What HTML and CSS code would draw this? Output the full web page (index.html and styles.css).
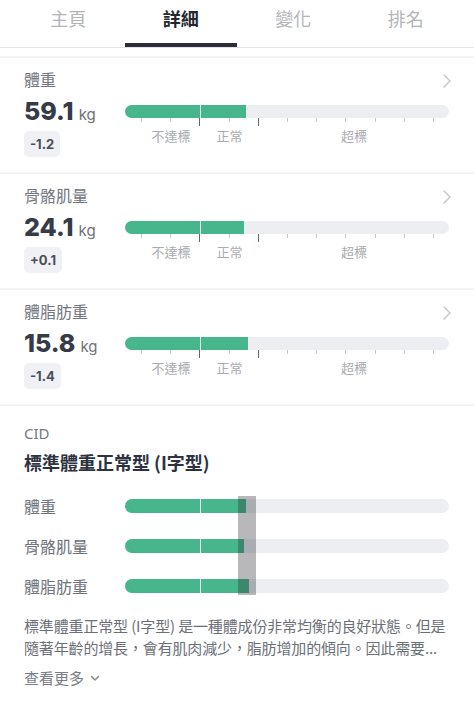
FILE: index.html
```html
<!DOCTYPE html>
<html lang="zh-Hant">
<head>
    <meta charset="UTF-8">
    <meta name="viewport" content="width=device-width, initial-scale=1.0">
    <title>身體組成 - 詳細</title>
    <link rel="stylesheet" href="styles.css">
</head>
<body>

<div class="tabs">
    <div class="tab">主頁</div>
    <div class="tab active">詳細</div>
    <div class="tab">變化</div>
    <div class="tab">排名</div>
</div>

<div class="list">
    <div class="item">
        <div class="item-head">
            <span class="item-name">體重</span>
            <svg class="arrow" width="10" height="16" viewBox="0 0 10 16"><polyline points="2,2 8,8 2,14" fill="none" stroke="#c9cacf" stroke-width="1.6" stroke-linecap="round" stroke-linejoin="round"/></svg>
        </div>
        <div class="item-body">
            <div class="item-left">
                <div class="value">59.1<span class="unit">kg</span></div>
                <span class="diff">-1.2</span>
            </div>
            <div class="scale">
                <div class="bar"><div class="fill" style="width: 121px"></div></div>
                <div class="ticks">
                    <i></i><i></i><i class="major"></i><i></i><i class="major"></i><i></i><i></i><i></i><i></i><i></i><i></i>
                </div>
                <div class="zones"><span>不達標</span><span>正常</span><span>超標</span></div>
            </div>
        </div>
    </div>

    <div class="item">
        <div class="item-head">
            <span class="item-name">骨骼肌量</span>
            <svg class="arrow" width="10" height="16" viewBox="0 0 10 16"><polyline points="2,2 8,8 2,14" fill="none" stroke="#c9cacf" stroke-width="1.6" stroke-linecap="round" stroke-linejoin="round"/></svg>
        </div>
        <div class="item-body">
            <div class="item-left">
                <div class="value">24.1<span class="unit">kg</span></div>
                <span class="diff">+0.1</span>
            </div>
            <div class="scale">
                <div class="bar"><div class="fill" style="width: 119px"></div></div>
                <div class="ticks">
                    <i></i><i></i><i class="major"></i><i></i><i class="major"></i><i></i><i></i><i></i><i></i><i></i><i></i>
                </div>
                <div class="zones"><span>不達標</span><span>正常</span><span>超標</span></div>
            </div>
        </div>
    </div>

    <div class="item">
        <div class="item-head">
            <span class="item-name">體脂肪重</span>
            <svg class="arrow" width="10" height="16" viewBox="0 0 10 16"><polyline points="2,2 8,8 2,14" fill="none" stroke="#c9cacf" stroke-width="1.6" stroke-linecap="round" stroke-linejoin="round"/></svg>
        </div>
        <div class="item-body">
            <div class="item-left">
                <div class="value">15.8<span class="unit">kg</span></div>
                <span class="diff">-1.4</span>
            </div>
            <div class="scale">
                <div class="bar"><div class="fill" style="width: 123px"></div></div>
                <div class="ticks">
                    <i></i><i></i><i class="major"></i><i></i><i class="major"></i><i></i><i></i><i></i><i></i><i></i><i></i>
                </div>
                <div class="zones"><span>不達標</span><span>正常</span><span>超標</span></div>
            </div>
        </div>
    </div>
</div>

<div class="cid">
    <div class="cid-label">CID</div>
    <div class="cid-title">標準體重正常型 (I字型)</div>

    <div class="compare">
        <div class="compare-row">
            <span class="compare-name">體重</span>
            <div class="bar"><div class="fill" style="width: 121px"></div></div>
        </div>
        <div class="compare-row">
            <span class="compare-name">骨骼肌量</span>
            <div class="bar"><div class="fill" style="width: 119px"></div></div>
        </div>
        <div class="compare-row">
            <span class="compare-name">體脂肪重</span>
            <div class="bar"><div class="fill" style="width: 124px"></div></div>
        </div>
        <!-- faixa do padrão sobre as barras -->
        <div class="standard"></div>
    </div>

    <p class="cid-desc">標準體重正常型 (I字型) 是一種體成份非常均衡的良好狀態。但是隨著年齡的增長，會有肌肉減少，脂肪增加的傾向。因此需要...</p>

    <div class="more">
        查看更多
        <svg width="10" height="7" viewBox="0 0 10 7"><polyline points="1.5,1.5 5,5 8.5,1.5" fill="none" stroke="#8a8d94" stroke-width="1.5" stroke-linecap="round" stroke-linejoin="round"/></svg>
    </div>
</div>

</body>
</html>
```

FILE: styles.css
```css
body {
    margin: 0;
    background-color: #ffffff;
    font-family: "Noto Sans CJK TC", "Noto Sans", sans-serif;
    color: #363b48;
}

/* Abas do topo */
.tabs {
    display: flex;
    padding: 0 12px;
    border-bottom: 1px solid #e4e4e7;
}
.tab {
    flex: 1;
    text-align: center;
    font-size: 18px;
    line-height: 36px;
    padding-bottom: 7px;
    border-bottom: 4px solid transparent;
    color: #b3b4b9;
}
.tab.active {
    color: #23272f;
    font-weight: 700;
    border-bottom-color: #2b3038;
}

/* Lista de medidas */
.list {
    padding-top: 8px;
}
.item {
    border-top: 2px solid #f3f4f6;
    padding: 10px 25px 15px 24px;
}
.item:last-child {
    border-bottom: 2px solid #f3f4f6;
}
.item-head {
    display: flex;
    justify-content: space-between;
    align-items: center;
    height: 22px;
}
.item-name {
    font-size: 16px;
    line-height: 22px;
    color: #74777f;
}
.arrow {
    margin-top: 4px;
    margin-right: -3px;
}
.item-body {
    display: grid;
    grid-template-columns: 101px 1fr;
    margin-top: 6px;
}
.item-left {
    display: flex;
    flex-direction: column;
    align-items: flex-start;
}
.value {
    height: 30px;
    font-family: Inter, "Noto Sans", sans-serif;
    font-size: 25px;
    font-weight: 800;
    line-height: 30px;
    color: #363b48;
}
.unit {
    font-size: 15px;
    font-weight: 400;
    line-height: 1;
    color: #6e717a;
    margin-left: 5px;
}
.diff {
    margin-top: 5px;
    height: 26px;
    line-height: 26px;
    padding: 0 6px;
    border-radius: 5px;
    background-color: #f0f1f4;
    font-family: Inter, "Noto Sans", sans-serif;
    font-size: 13px;
    font-weight: 700;
    color: #4a4d56;
}

/* Barra com escala */
.scale {
    padding-top: 9px;
}
.bar {
    position: relative;
    height: 13px;
    border-radius: 7px;
    background-color: #eceef2;
    overflow: hidden;
}
.fill {
    position: relative;
    height: 100%;
    background-color: #48b68d;
}
.fill::after {
    content: "";
    position: absolute;
    left: 75px;
    top: 0;
    bottom: 0;
    width: 1px;
    background-color: rgba(255, 255, 255, 0.85);
}
.ticks {
    display: flex;
    justify-content: space-between;
    align-items: flex-start;
    height: 9px;
    padding: 0 15px 0 16px;
}
.ticks i {
    width: 1px;
    height: 4px;
    background-color: #c6c7cc;
}
.ticks i.major {
    height: 8px;
    background-color: #64676f;
}
.zones {
    display: grid;
    grid-template-columns: 58px 59px 1fr;
    padding-left: 17px;
    font-size: 13px;
    line-height: 18px;
    color: #a8abb1;
    text-align: center;
}

/* Seção CID */
.cid {
    padding: 17px 25px 0 24px;
}
.cid-label {
    font-family: "Noto Sans", sans-serif;
    font-size: 15px;
    line-height: 20px;
    color: #74777f;
}
.cid-title {
    margin-top: 6px;
    font-size: 18px;
    font-weight: 700;
    line-height: 26px;
    color: #2d3240;
}
.compare {
    position: relative;
    margin-top: 11px;
}
.compare-row {
    display: grid;
    grid-template-columns: 101px 1fr;
    align-items: center;
    height: 40px;
}
.compare-row .bar {
    height: 14px;
}
.compare-name {
    font-size: 16px;
    line-height: 22px;
    color: #6f737b;
}
.standard {
    position: absolute;
    left: 214px;
    top: 10px;
    bottom: 11px;
    width: 18px;
    background-color: rgba(40, 40, 45, 0.33);
}
.cid-desc {
    margin: 9px 0 0;
    font-size: 15px;
    line-height: 22px;
    letter-spacing: -0.15px;
    color: #6c6f77;
}
.more {
    margin-top: 8px;
    display: flex;
    align-items: center;
    gap: 6px;
    font-size: 15px;
    line-height: 22px;
    color: #7a7d85;
}
```
